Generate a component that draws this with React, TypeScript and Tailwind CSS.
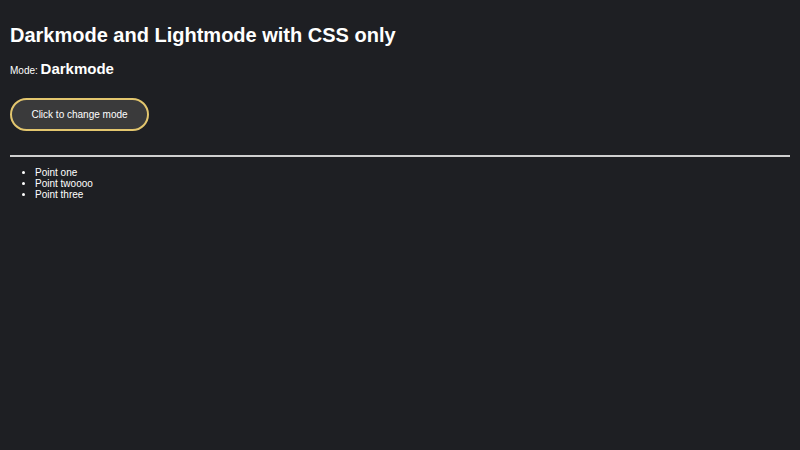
import React from 'react';

const App = () => {
  return (
    <div className="min-h-[450px] bg-[#1e1f23] text-white px-[10px] pt-[22px] font-['Liberation_Sans',Arial,sans-serif]">
      <h1 className="text-[20px] font-bold leading-[26px]">Darkmode and Lightmode with CSS only</h1>
      <p className="mt-[11px] text-[10px] leading-[20px]">
        Mode: <span className="text-[15px] font-bold">Darkmode</span>
      </p>
      <button className="mt-[17px] h-[33px] w-[139px] rounded-full border-2 border-[#e3c66e] bg-[#3a3a3b] text-[10px] text-white">
        Click to change mode
      </button>
      <hr className="mt-[24px] border-t-2 border-[#cfcfcf]" />
      <ul className="mt-[10px] list-disc pl-[25px] text-[10px] leading-[11px]">
        <li>Point one</li>
        <li>Point twoooo</li>
        <li>Point three</li>
      </ul>
    </div>
  );
};

export default App;
